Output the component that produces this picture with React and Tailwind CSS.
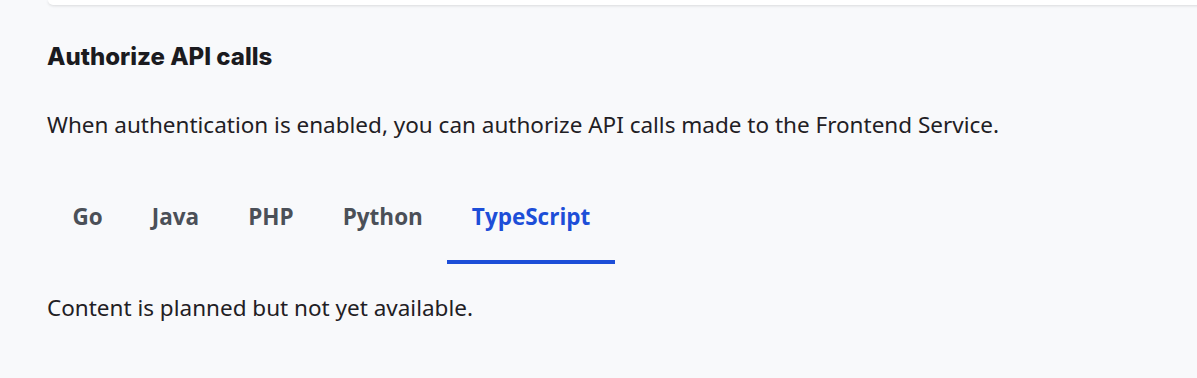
import React, { useState } from 'react';

const tabs = ['Go', 'Java', 'PHP', 'Python', 'TypeScript'];

const App = () => {
  const [active, setActive] = useState('TypeScript');

  return (
    <div className="min-h-screen w-full bg-[#f8f9fb] overflow-hidden" style={{ fontFamily: '"Noto Sans", "Open Sans", sans-serif' }}>
      {/* card above, cut off by the viewport */}
      <div className="ml-[48px] -mr-4 h-[5px] rounded-b-lg bg-white shadow-[0_1px_3px_rgba(0,0,0,0.12)]" />

      <div className="pl-[47px]">
        <h2 className="mt-[36px] text-[24px] leading-[32px] font-extrabold text-[#1b1b1f]" style={{ fontFamily: 'Inter, Lato, sans-serif' }}>
          Authorize API calls
        </h2>

        <p className="mt-[36px] text-[22.5px] leading-[32px] text-[#1f2024]">
          When authentication is enabled, you can authorize API calls made to the Frontend Service.
        </p>

        {/* language tabs */}
        <div className="mt-[40px] ml-[1px] flex">
          {tabs.map((t) => (
            <button
              key={t}
              onClick={() => setActive(t)}
              className={`px-[24.5px] pt-[20px] pb-[27px] text-[22.5px] leading-[32px] font-bold border-b-4 ${
                active === t ? 'text-[#1d4ed8] border-[#1d4ed8]' : 'text-[#4b5058] border-transparent'
              }`}
              style={{ fontFamily: '"Open Sans", sans-serif' }}
            >
              {t}
            </button>
          ))}
        </div>

        <p className="mt-[28px] text-[22.5px] leading-[32px] text-[#1f2024]">
          Content is planned but not yet available.
        </p>
      </div>
    </div>
  );
};

export default App;
